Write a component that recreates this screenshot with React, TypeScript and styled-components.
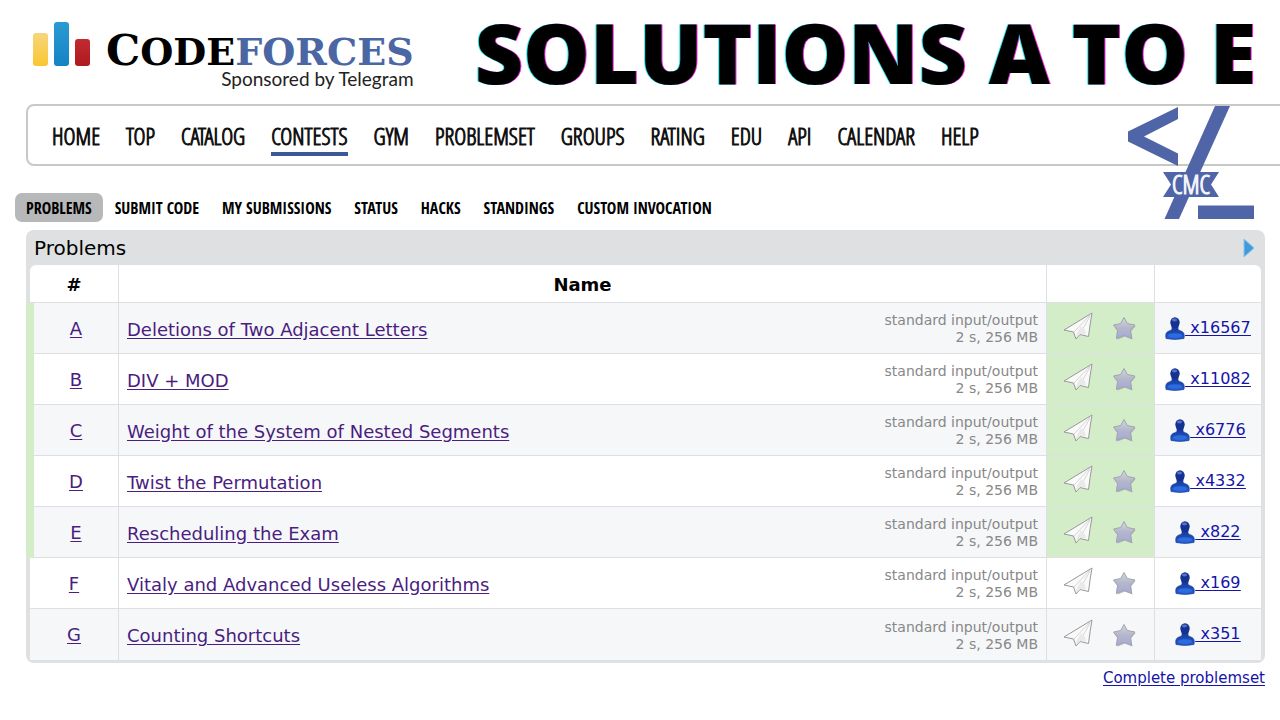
import React from "react";
import styled, { createGlobalStyle, css } from "styled-components";

const verdana = '"DejaVu Sans", Verdana, sans-serif';
const narrowBold = '"Open Sans Condensed", "Roboto Condensed", sans-serif';
const narrowLight = '"Open Sans Condensed Light", "Roboto Condensed", sans-serif';
const line = "#dddfe2";
const frame = "#dfe0e2";
const solved = "#d4edc9";
const brandBlue = "#4a66a3";

const GlobalStyle = createGlobalStyle`
  * { box-sizing: border-box; }
  body { margin: 0; background: #fff; color: #000; font-family: ${verdana}; overflow-x: hidden; }
`;

const Page = styled.div`
  position: relative;
`;

const Header = styled.header`
  display: flex;
  justify-content: space-between;
  height: 104px;
  padding: 0 24px 0 32px;
`;

const Brand = styled.a`
  display: flex;
  gap: 15px;
  padding-top: 22px;
  color: #000;
  text-decoration: none;
`;

const BrandText = styled.span`
  display: flex;
  flex-direction: column;
  align-items: flex-end;
  padding-top: 10px;
`;

const Wordmark = styled.span`
  font-family: "DejaVu Serif", serif;
  font-weight: 700;
  font-size: 38px;
  line-height: 36px;
  white-space: nowrap;
`;

const Initial = styled.span`
  font-size: 43px;
`;

const Blue = styled.span`
  color: ${brandBlue};
`;

const Sponsor = styled.span`
  font-family: Lato, sans-serif;
  font-size: 19px;
  line-height: 18px;
  color: #222;
  white-space: nowrap;
`;

const Title = styled.h1`
  margin: 0;
  font-family: "Open Sans", sans-serif;
  font-weight: 800;
  font-size: 84px;
  line-height: 104px;
  white-space: nowrap;
  text-shadow: -1px 0 #2fe9f0, 1px 0 #f02be6;
`;

const MainNav = styled.nav`
  display: flex;
  gap: 26px;
  height: 62px;
  margin: 0 -12px 0 26px;
  padding: 14px 24px 0;
  border: 2px solid #c8c8c8;
  border-radius: 8px;
`;

const MainLink = styled.a<{ $active?: boolean }>`
  height: 36px;
  font-family: ${narrowLight};
  font-size: 23px;
  line-height: 32px;
  color: #111;
  -webkit-text-stroke: 1px #111;
  text-decoration: none;
  white-space: nowrap;
  border-bottom: 4px solid ${(p) => (p.$active ? "#3b5998" : "transparent")};
`;

const SubNav = styled.nav`
  display: flex;
  gap: 1px;
  margin: 27px 0 8px 15px;
`;

const SubLink = styled.a<{ $active?: boolean }>`
  padding: 2px 11px 0;
  border-radius: 7px;
  font-family: ${narrowBold};
  font-weight: 700;
  font-size: 16px;
  line-height: 27px;
  color: #000;
  text-decoration: none;
  white-space: nowrap;
  background: ${(p) => (p.$active ? "#b7b8ba" : "transparent")};
`;

const Panel = styled.section`
  margin: 0 15px 0 26px;
  padding: 0 4px 3px;
  border-radius: 8px;
  background: ${frame};
`;

const PanelHead = styled.div`
  display: flex;
  align-items: center;
  justify-content: space-between;
  height: 35px;
  padding: 0 6px 0 4px;
`;

const PanelTitle = styled.h2`
  margin: 0;
  font-weight: 400;
  font-size: 20px;
`;

const Table = styled.table`
  width: 100%;
  table-layout: fixed;
  border-collapse: separate;
  border-spacing: 0;
  border-radius: 6px;
  background: #fff;
`;

const HeadCell = styled.th<{ $width?: number }>`
  width: ${(p) => (p.$width ? `${p.$width}px` : "auto")};
  height: 38px;
  padding: 2px 0 0;
  font-size: 18px;
  border-bottom: 1px solid ${line};
  & + & { border-left: 1px solid ${line}; }
`;

const Cell = styled.td`
  padding: 2px 8px 0;
  & + & { border-left: 1px solid ${line}; }
`;

const IndexCell = styled(Cell)<{ $solved: boolean }>`
  padding-top: 0;
  text-align: center;
  ${(p) =>
    p.$solved &&
    css`
      border-left: 4px solid ${solved};
      box-shadow: -4px 0 ${solved};
    `}
`;

const Row = styled.tr`
  height: 51px;
  &:nth-child(odd) { background: #f6f7f9; }
  &:not(:last-child) > td { border-bottom: 1px solid ${line}; }
`;

const ActionCell = styled(Cell)<{ $solved: boolean }>`
  padding-top: 0;
  background: ${(p) => (p.$solved ? solved : "transparent")};
`;

const CountCell = styled(Cell)`
  padding-top: 0;
`;

const ProblemLink = styled.a`
  font-size: 18px;
  color: #4a1d80;
  text-underline-offset: 2px;
`;

const NameLine = styled.div`
  display: flex;
  align-items: center;
  justify-content: space-between;
`;

const Limits = styled.div`
  font-size: 14px;
  line-height: 17px;
  color: #888;
  text-align: right;
`;

const Actions = styled.div`
  display: flex;
  justify-content: center;
  align-items: flex-end;
  gap: 19px;
  padding: 0 2px 4px 0;
`;

const IconButton = styled.button`
  display: flex;
  padding: 0;
  border: 0;
  background: none;
`;

const CountLink = styled.a`
  display: flex;
  justify-content: center;
  align-items: center;
  font-size: 16px;
  color: #1414a8;
  text-underline-offset: 2px;
  white-space: pre;
`;

const Count = styled.span`
  padding-bottom: 2px;
  text-decoration: underline;
`;

const Footer = styled.footer`
  padding: 5px 15px 0;
  text-align: right;
`;

const FooterLink = styled.a`
  font-size: 15px;
  color: #1414a8;
  text-underline-offset: 2px;
`;

const Badge = styled.svg`
  position: absolute;
  top: 106px;
  right: 26px;
`;

const BarsLogo = () => (
  <svg width="59" height="45" viewBox="0 0 59 45" aria-hidden="true">
    <defs>
      <linearGradient id="bar-y" x2="0" y2="1"><stop stopColor="#f5d67c" /><stop offset="1" stopColor="#fbc62f" /></linearGradient>
      <linearGradient id="bar-b" x2="0" y2="1"><stop stopColor="#2a9ad3" /><stop offset="1" stopColor="#1583c4" /></linearGradient>
      <linearGradient id="bar-r" x2="0" y2="1"><stop stopColor="#c22a30" /><stop offset="1" stopColor="#ad1a20" /></linearGradient>
    </defs>
    <rect x="1" y="11" width="15" height="33" rx="3" fill="url(#bar-y)" />
    <rect x="22" y="0" width="15" height="44" rx="3" fill="url(#bar-b)" />
    <rect x="43" y="17" width="15" height="27" rx="3" fill="url(#bar-r)" />
  </svg>
);

const CmcBadge = () => (
  <Badge width="128" height="114" viewBox="0 0 128 114" role="img" aria-label="CMC">
    <g fill="#4f65a8">
      <path d="M52 1V13L18 30.500L52 47.500V60L2 35.500V25.500Z" />
      <path d="M89 0H104L53 113H38.500Z" />
      <path d="M37 66H93L85 78.500L93 91H37L45 78.500Z" />
      <rect x="72" y="99.500" width="56" height="13.500" />
    </g>
    <text x="65" y="88" textAnchor="middle" fontFamily={narrowLight} fontSize="25" fill="#f1f3f8" stroke="#f1f3f8" strokeWidth="1.200">CMC</text>
  </Badge>
);

const PlaneIcon = () => (
  <svg width="30" height="28" viewBox="0 0 30 28" aria-hidden="true">
    <path d="M29 1Q27 12 25.500 24.500L17 22.500L13 27L10.500 20L1 18Z" fill="#fafafa" stroke="#989898" strokeWidth="1" strokeLinejoin="round" />
    <path d="M28 2L11 20M27 4L17 22" fill="none" stroke="#d6d6d6" strokeWidth="1" />
    <path d="M18 14L14 21L13 25L16.500 22L23 22.500L22 18Z" fill="#e9e9e9" />
  </svg>
);

const StarIcon = () => (
  <svg width="24" height="24" viewBox="-1 -1 24 24" aria-hidden="true">
    <path d="M11.500 1.500L15 8L22.500 9L18 14.500L19.500 22.500L12 19.500L4.500 22.500L5 14.500L1 9L8.500 8Z" fill="#8e909c" opacity="0.600" />
    <path d="M11 0.500L14.300 6.500L22 8L17.500 13.500L18.700 21.500L11 18.500L3.300 21.500L4.500 13.500L0.500 8L7.700 6.500Z" fill="url(#star-fill)" stroke="#a2a4b0" strokeWidth="1" strokeLinejoin="round" />
  </svg>
);

const UserIcon = () => (
  <svg width="20" height="23" viewBox="0 0 20 23" aria-hidden="true">
    <path d="M1 21.500C0 16.500 1.500 14.500 5.500 13.500Q8 12.500 6.500 8H13.500Q12 12.500 14.500 13.500C18.500 14.500 20 16.500 19 21.500Q10 23.500 1 21.500Z" fill="url(#user-fill)" stroke="#17348c" strokeWidth="0.600" />
    <ellipse cx="10" cy="5.500" rx="4.700" ry="5.200" fill="#153192" />
    <ellipse cx="9.500" cy="3" rx="2.600" ry="1.400" fill="#5273c6" />
    <ellipse cx="10" cy="18.500" rx="7" ry="2.300" fill="#2c6ce0" />
  </svg>
);

const Defs = styled.svg`
  position: absolute;
`;

const IconDefs = () => (
  <Defs width="0" height="0" aria-hidden="true">
    <defs>
      <linearGradient id="star-fill" x2="0" y2="1"><stop stopColor="#d4d8dc" /><stop offset="0.500" stopColor="#b4b7cb" /><stop offset="1" stopColor="#a6a9d6" /></linearGradient>
      <linearGradient id="user-fill" x2="0" y2="1"><stop stopColor="#12308f" /><stop offset="1" stopColor="#2460d4" /></linearGradient>
    </defs>
  </Defs>
);

const mainItems = ["HOME", "TOP", "CATALOG", "CONTESTS", "GYM", "PROBLEMSET", "GROUPS", "RATING", "EDU", "API", "CALENDAR", "HELP"];
const subItems = ["PROBLEMS", "SUBMIT CODE", "MY SUBMISSIONS", "STATUS", "HACKS", "STANDINGS", "CUSTOM INVOCATION"];
const problems = [
  { id: "A", name: "Deletions of Two Adjacent Letters", count: 16567, done: true },
  { id: "B", name: "DIV + MOD", count: 11082, done: true },
  { id: "C", name: "Weight of the System of Nested Segments", count: 6776, done: true },
  { id: "D", name: "Twist the Permutation", count: 4332, done: true },
  { id: "E", name: "Rescheduling the Exam", count: 822, done: true },
  { id: "F", name: "Vitaly and Advanced Useless Algorithms", count: 169, done: false },
  { id: "G", name: "Counting Shortcuts", count: 351, done: false },
];

export default function App() {
  return (
    <Page>
      <GlobalStyle />
      <IconDefs />
      <Header>
        <Brand href="#">
          <BarsLogo />
          <BrandText>
            <Wordmark><Initial>C</Initial>ODE<Blue>FORCES</Blue></Wordmark>
            <Sponsor>Sponsored by Telegram</Sponsor>
          </BrandText>
        </Brand>
        <Title>SOLUTIONS A TO E</Title>
      </Header>
      <MainNav>
        {mainItems.map((item) => (
          <MainLink key={item} href="#" $active={item === "CONTESTS"}>{item}</MainLink>
        ))}
      </MainNav>
      <CmcBadge />
      <SubNav>
        {subItems.map((item) => (
          <SubLink key={item} href="#" $active={item === "PROBLEMS"}>{item}</SubLink>
        ))}
      </SubNav>
      <Panel>
        <PanelHead>
          <PanelTitle>Problems</PanelTitle>
          <IconButton aria-label="Expand">
            <svg width="12" height="20" viewBox="0 0 12 20" aria-hidden="true">
              <path d="M1 1L11 10L1 19Z" fill="#3f9bdc" stroke="#8ac4ec" />
            </svg>
          </IconButton>
        </PanelHead>
        <Table>
          <thead>
            <tr>
              <HeadCell $width={88}>#</HeadCell>
              <HeadCell>Name</HeadCell>
              <HeadCell $width={108} />
              <HeadCell $width={107} />
            </tr>
          </thead>
          <tbody>
            {problems.map((p) => (
              <Row key={p.id}>
                <IndexCell $solved={p.done}><ProblemLink href="#">{p.id}</ProblemLink></IndexCell>
                <Cell>
                  <NameLine>
                    <ProblemLink href="#">{p.name}</ProblemLink>
                    <Limits>standard input/output<br />2 s, 256 MB</Limits>
                  </NameLine>
                </Cell>
                <ActionCell $solved={p.done}>
                  <Actions>
                    <IconButton aria-label={`Submit ${p.id}`}><PlaneIcon /></IconButton>
                    <IconButton aria-label={`Favourite ${p.id}`}><StarIcon /></IconButton>
                  </Actions>
                </ActionCell>
                <CountCell><CountLink href="#"><UserIcon /><Count> x{p.count}</Count></CountLink></CountCell>
              </Row>
            ))}
          </tbody>
        </Table>
      </Panel>
      <Footer><FooterLink href="#">Complete problemset</FooterLink></Footer>
    </Page>
  );
}
